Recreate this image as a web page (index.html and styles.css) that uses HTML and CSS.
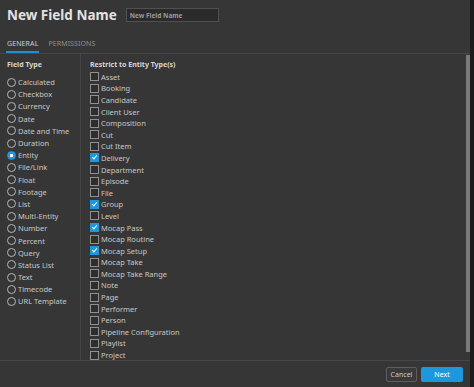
FILE: index.html
```html
<!DOCTYPE html>
<html lang="en">
<head>
    <meta charset="UTF-8">
    <title>New Field Name</title>
    <link rel="stylesheet" href="styles.css">
</head>
<body>
    <div class="dialog">
        <div class="header">
            <h1>New Field Name</h1>
            <input type="text" class="name-input" placeholder="New Field Name">
        </div>
        <div class="tabs">
            <span class="tab active">GENERAL</span>
            <span class="tab">PERMISSIONS</span>
        </div>
        <div class="main">
            <div class="types">
                <p class="col-title">Field Type</p>
                <div class="radio-list">
                    <label class="radio"><span class="dot"></span>Calculated</label>
                    <label class="radio"><span class="dot"></span>Checkbox</label>
                    <label class="radio"><span class="dot"></span>Currency</label>
                    <label class="radio"><span class="dot"></span>Date</label>
                    <label class="radio"><span class="dot"></span>Date and Time</label>
                    <label class="radio"><span class="dot"></span>Duration</label>
                    <label class="radio"><span class="dot on"></span>Entity</label>
                    <label class="radio"><span class="dot"></span>File/Link</label>
                    <label class="radio"><span class="dot"></span>Float</label>
                    <label class="radio"><span class="dot"></span>Footage</label>
                    <label class="radio"><span class="dot"></span>List</label>
                    <label class="radio"><span class="dot"></span>Multi-Entity</label>
                    <label class="radio"><span class="dot"></span>Number</label>
                    <label class="radio"><span class="dot"></span>Percent</label>
                    <label class="radio"><span class="dot"></span>Query</label>
                    <label class="radio"><span class="dot"></span>Status List</label>
                    <label class="radio"><span class="dot"></span>Text</label>
                    <label class="radio"><span class="dot"></span>Timecode</label>
                    <label class="radio"><span class="dot"></span>URL Template</label>
                </div>
            </div>
            <div class="entities">
                <p class="col-title">Restrict to Entity Type(s)</p>
                <div class="check-list">
                    <label class="check"><span class="box"></span>Asset</label>
                    <label class="check"><span class="box"></span>Booking</label>
                    <label class="check"><span class="box"></span>Candidate</label>
                    <label class="check"><span class="box"></span>Client User</label>
                    <label class="check"><span class="box"></span>Composition</label>
                    <label class="check"><span class="box"></span>Cut</label>
                    <label class="check"><span class="box"></span>Cut Item</label>
                    <label class="check"><span class="box on"></span>Delivery</label>
                    <label class="check"><span class="box"></span>Department</label>
                    <label class="check"><span class="box"></span>Episode</label>
                    <label class="check"><span class="box"></span>File</label>
                    <label class="check"><span class="box on"></span>Group</label>
                    <label class="check"><span class="box"></span>Level</label>
                    <label class="check"><span class="box on"></span>Mocap Pass</label>
                    <label class="check"><span class="box"></span>Mocap Routine</label>
                    <label class="check"><span class="box on"></span>Mocap Setup</label>
                    <label class="check"><span class="box"></span>Mocap Take</label>
                    <label class="check"><span class="box"></span>Mocap Take Range</label>
                    <label class="check"><span class="box"></span>Note</label>
                    <label class="check"><span class="box"></span>Page</label>
                    <label class="check"><span class="box"></span>Performer</label>
                    <label class="check"><span class="box"></span>Person</label>
                    <label class="check"><span class="box"></span>Pipeline Configuration</label>
                    <label class="check"><span class="box"></span>Playlist</label>
                    <label class="check"><span class="box"></span>Project</label>
                </div>
            </div>
            <div class="scrollbar"><div class="thumb"></div></div>
        </div>
        <div class="footer">
            <button class="btn cancel">Cancel</button>
            <button class="btn next">Next</button>
        </div>
    </div>
</body>
</html>
```

FILE: styles.css
```css
body {
    margin: 0;
    background-color: #1c1c1c;
    font-family: "Noto Sans", "Open Sans", sans-serif;
    color: #c8c8c8;
}
.dialog {
    width: 470px;
    height: 387px;
    background-color: #363636;
    display: flex;
    flex-direction: column;
    overflow: hidden;
}
.header {
    display: flex;
    align-items: center;
    gap: 9px;
    padding: 5px 7px 0 7px;
    height: 20px;
}
h1 {
    margin: 0;
    font-size: 13.5px;
    font-weight: bold;
    color: #e2e2e2;
    line-height: 20px;
}
.name-input {
    width: 93px;
    height: 14px;
    box-sizing: border-box;
    padding: 0 3px;
    background-color: #2b2b2b;
    border: 1px solid #505050;
    font-family: inherit;
    font-size: 6.5px;
    font-weight: bold;
    color: #ccc;
}
.name-input::placeholder {
    color: #9a9a9a;
}
.tabs {
    display: flex;
    gap: 9px;
    padding: 0 7px;
    margin-top: 12px;
    border-bottom: 1px solid #474747;
    height: 17px;
    box-sizing: border-box;
}
.tab {
    font-size: 7px;
    color: #8e8e8e;
    line-height: 14px;
    letter-spacing: 0.1px;
}
.tab.active {
    color: #cfcfcf;
    border-bottom: 2px solid #1e8fd2;
    margin-left: -1px;
    padding: 0 1px;
}
.main {
    display: flex;
    height: 306px;
    border-bottom: 1px solid #474747;
}
.types {
    width: 81px;
    border-right: 1px solid #454545;
    padding: 5px 0 0 7px;
    box-sizing: border-box;
}
.entities {
    flex: 1;
    padding: 5px 0 0 9px;
    overflow: hidden;
}
.col-title {
    margin: 0;
    font-size: 7px;
    font-weight: bold;
    color: #d6d6d6;
    line-height: 12px;
}
.radio-list {
    margin-top: 5px;
}
.radio, .check {
    display: flex;
    align-items: center;
    gap: 2px;
    font-size: 7.5px;
    white-space: nowrap;
}
.radio {
    height: 12.2px;
}
.check {
    height: 11.6px;
}
.dot {
    width: 7px;
    height: 7px;
    border: 1px solid #b8b8b8;
    border-radius: 50%;
    flex-shrink: 0;
}
.dot.on {
    border-color: #1d98dc;
    background: radial-gradient(circle, #ffffff 0 1.5px, #1d98dc 2px);
}
.box {
    width: 7px;
    height: 7px;
    border: 1px solid #909090;
    background-color: #2e2e2e;
    flex-shrink: 0;
    position: relative;
}
.box.on {
    border-color: #1d98dc;
    background-color: #1d98dc;
}
.box.on::after {
    content: "";
    position: absolute;
    left: 2px;
    top: 0;
    width: 2px;
    height: 4px;
    border: solid #fff;
    border-width: 0 1.2px 1.2px 0;
    transform: rotate(40deg);
}
.scrollbar {
    width: 4px;
    padding-top: 1px;
}
.thumb {
    height: 297px;
    background-color: #7a7a7a;
}
.footer {
    display: flex;
    justify-content: flex-end;
    gap: 4px;
    padding: 6px 7px 0 0;
}
.btn {
    height: 15px;
    padding: 0;
    font-family: inherit;
    font-size: 7px;
    border-radius: 2px;
    cursor: pointer;
}
.cancel {
    width: 31px;
    background-color: #393939;
    border: 1px solid #5e5e5e;
    color: #c8c8c8;
}
.next {
    width: 42px;
    background-color: #1d98dc;
    border: none;
    color: #fff;
}
```
